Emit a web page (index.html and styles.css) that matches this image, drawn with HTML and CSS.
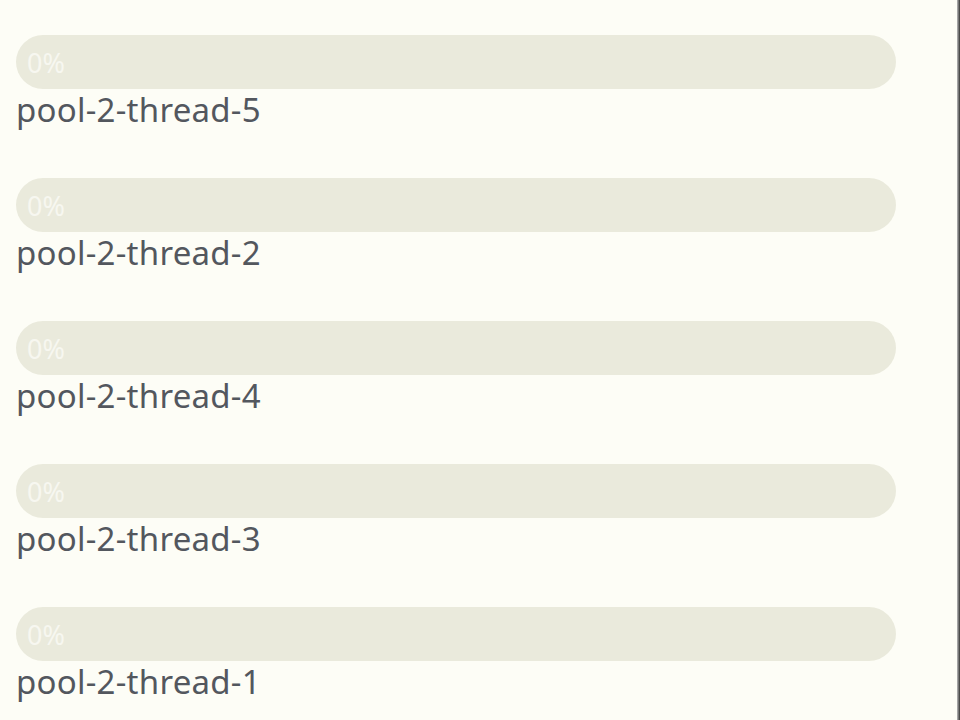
FILE: index.html
```html
<!DOCTYPE html>
<html>
<head>
<meta charset="utf-8">
<link rel="stylesheet" href="styles.css">
</head>
<body>
<div class="page">
  <div class="list">
    <div class="item">
      <div class="bar"><span class="pct">0%</span></div>
      <div class="label">pool-2-thread-5</div>
    </div>
    <div class="item">
      <div class="bar"><span class="pct">0%</span></div>
      <div class="label">pool-2-thread-2</div>
    </div>
    <div class="item">
      <div class="bar"><span class="pct">0%</span></div>
      <div class="label">pool-2-thread-4</div>
    </div>
    <div class="item">
      <div class="bar"><span class="pct">0%</span></div>
      <div class="label">pool-2-thread-3</div>
    </div>
    <div class="item">
      <div class="bar"><span class="pct">0%</span></div>
      <div class="label">pool-2-thread-1</div>
    </div>
  </div>
  <div class="edge"></div>
</div>
</body>
</html>
```
FILE: styles.css
```css
html, body {
  margin: 0;
  padding: 0;
  background: #fdfdf6;
}
.page {
  display: flex;
  width: 960px;
  height: 720px;
  overflow: hidden;
}
.list {
  flex: 1;
  display: flex;
  flex-direction: column;
  gap: 46px;
  padding: 35px 0 0 16px;
}
.item {
  display: flex;
  flex-direction: column;
  width: 880px;
}
.bar {
  height: 54px;
  border-radius: 27px;
  background: #eaeadc;
  display: flex;
  align-items: center;
  padding-left: 11px;
}
.pct {
  font-family: "Noto Sans", sans-serif;
  font-size: 27px;
  line-height: 1;
  color: #f7f7f0;
}
.label {
  font-family: "Noto Sans", sans-serif;
  font-size: 33px;
  line-height: 45px;
  height: 45px;
  color: #53575e;
  margin-top: -2px;
  letter-spacing: 0.25px;
  white-space: nowrap;
}
.edge {
  width: 3px;
  height: 720px;
  background: linear-gradient(to right, #bbbbbb, #333333);
}
```
